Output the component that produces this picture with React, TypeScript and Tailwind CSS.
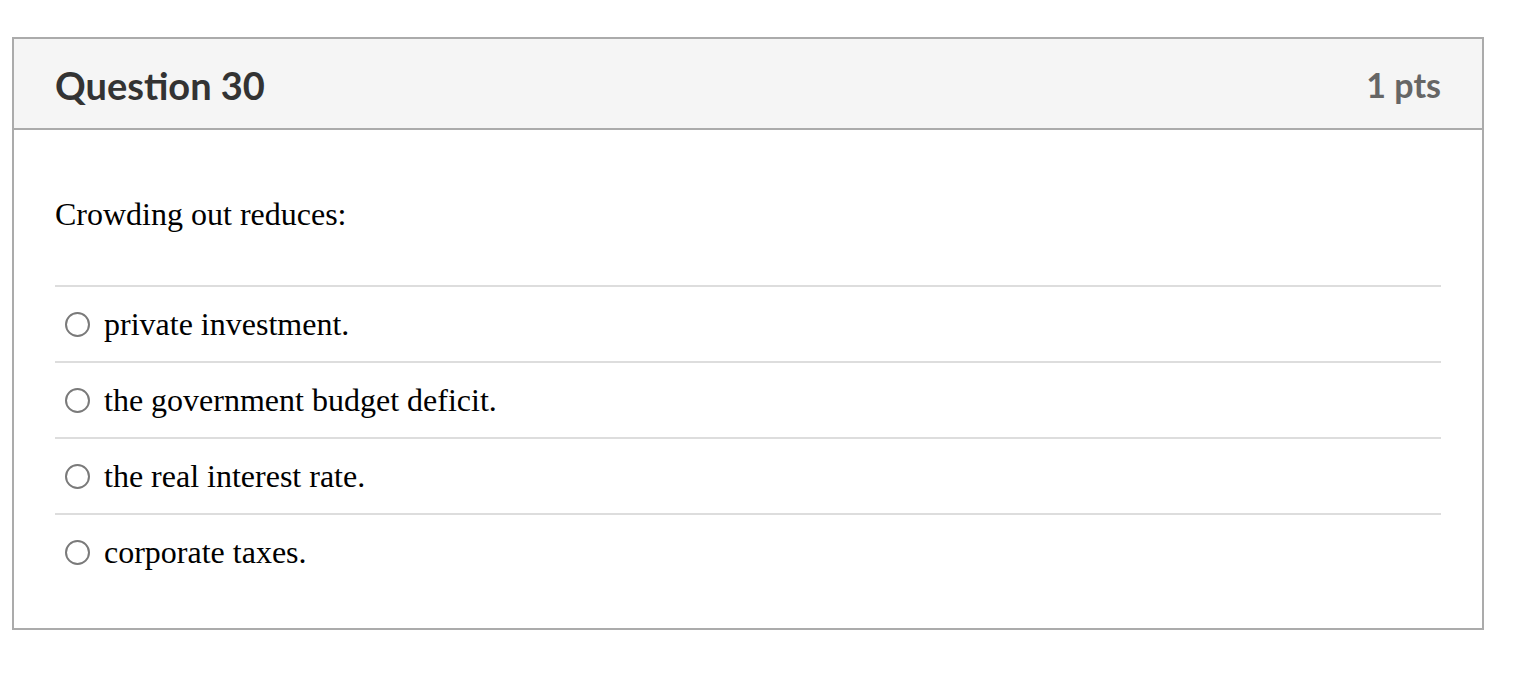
import React from 'react';

const answers = [
  'private investment.',
  'the government budget deficit.',
  'the real interest rate.',
  'corporate taxes.',
];

const Radio = () => (
  <span className="inline-block w-[25px] h-[25px] rounded-full border-2 border-[#7a7a7a] bg-white shrink-0" />
);

const App = () => {
  return (
    <div className="w-[1524px] h-[676px] bg-white pt-[37px] pl-[12px]">
      <div className="w-[1472px] border-2 border-[#ababab]">
        <div className="h-[91px] bg-[#f5f5f5] border-b-2 border-[#ababab] flex items-center justify-between px-[41px] font-['Lato',sans-serif]">
          <h2 className="text-[38px] leading-none font-bold text-[#333] mt-[2px]">Question 30</h2>
          <span className="text-[34px] leading-none font-bold text-[#666] mt-[2px]">1 pts</span>
        </div>
        <div className="px-[41px] pt-[62px] pb-[39px] font-['Liberation_Serif',serif] text-black">
          <p className="text-[32px] leading-[45px] mb-[48px]">Crowding out reduces:</p>
          {answers.map((answer) => (
            <div key={answer} className="h-[76px] border-t-2 border-[#dddddd] flex items-center pl-[10px] gap-[14px]">
              <Radio />
              <span className="text-[32px] leading-[40px]">{answer}</span>
            </div>
          ))}
        </div>
      </div>
    </div>
  );
};

export default App;
